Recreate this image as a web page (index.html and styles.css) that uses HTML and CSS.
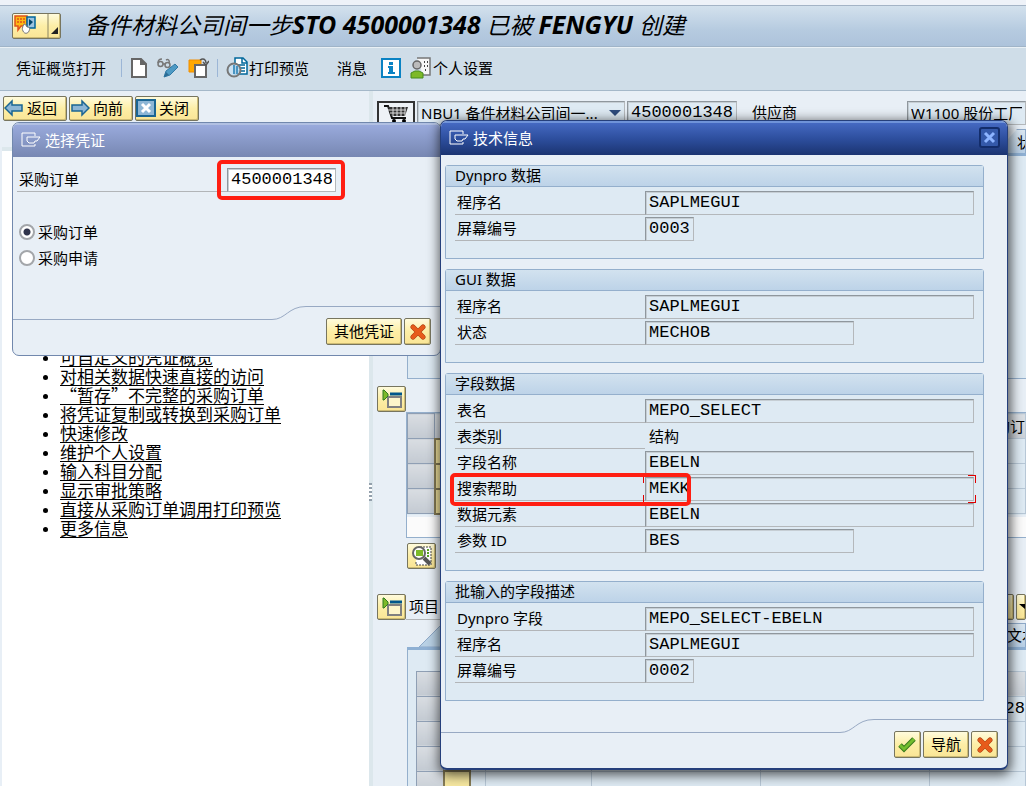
FILE: index.html
```html
<!DOCTYPE html>
<html lang="zh-CN">
<head>
    <meta charset="UTF-8">
    <meta name="viewport" content="width=device-width, initial-scale=1.0">
    <title>备件材料公司间一步STO 4500001348</title>
    <link rel="stylesheet" href="styles.css">
</head>
<body>
    <header class="title-bar">
        <button class="btn menu-btn" aria-label="菜单">
            <svg width="47" height="24" viewBox="0 0 47 24">
                <path d="M2 2h12v10H8l-3 4v-4H2z" fill="#fdb913" stroke="#e0521b" stroke-width="1.5"/>
                <path d="M4 5h2m1 0h2m1 0h2M4 8h2m1 0h2m1 0h2" stroke="#e0521b" stroke-width="1.5"/>
                <path d="M14 3h8v11h-8z" fill="#9cc3df" stroke="#00659b" stroke-width="1.5"/>
                <path d="M16 5l4 3-4 4z" fill="#00456b"/>
                <path d="M11 10c2 0 2 2 3 3 3 0 3 2 2 4-1 3-5 3-6 0-1-2-1-3 1-7z" fill="#fff" stroke="#777"/>
                <path d="M35 0v24" stroke="#8b8563"/>
                <path d="M45 13v7h-7z" fill="#222"/>
            </svg>
        </button>
        <h1>备件材料公司间一步<b>STO 4500001348</b> 已被 <b>FENGYU</b> 创建</h1>
    </header>

    <nav class="toolbar">
        <button class="tool tool-first">凭证概览打开</button>
        <span class="sep"></span>
        <button class="tool" aria-label="新建">
            <svg width="18" height="22" viewBox="0 0 18 22"><path d="M2 2h9l5 5v13H2z" fill="#fff" stroke="#666" stroke-width="2"/><path d="M10 1l7 7h-7z" fill="#666"/></svg>
        </button>
        <button class="tool tool-icon" aria-label="显示/更改">
            <svg width="22" height="22" viewBox="0 0 22 22"><g fill="none" stroke="#777" stroke-width="1.5"><circle cx="3.500" cy="7" r="2.500"/><circle cx="10.500" cy="8" r="2.500"/><path d="M1 6c0-3 2-4 4-4M6 7h2M12 6c1-3-1-4-3-3"/></g><path d="M7 20l2-6 9-7 3 3-8 8z" fill="#4e9ac4" stroke="#3179a5"/><path d="M7 20l2-5 3 3z" fill="#2a6b94"/></svg>
        </button>
        <button class="tool tool-icon" aria-label="其他采购订单">
            <svg width="21" height="22" viewBox="0 0 21 22"><path d="M1 3h12v12H1z" fill="#ffa800" stroke="#f08c00"/><path d="M7 8h11v12H7z" fill="#fff" stroke="#666" stroke-width="2"/><path d="M12 3c3-2 6-1 6 3m-3-1l3 3 3-4" fill="none" stroke="#555" stroke-width="1.5"/></svg>
        </button>
        <span class="sep"></span>
        <button class="tool">
            <svg width="22" height="22" viewBox="0 0 22 22"><path d="M9 1h8l4 4v12H9z" fill="#fff" stroke="#00679b" stroke-width="1.500"/><path d="M16 1v5h5M12 8h7M12 11h7M12 14h7" fill="none" stroke="#00679b" stroke-width="1.500"/><circle cx="8" cy="13" r="6.500" fill="#c9e2f3" fill-opacity=".85" stroke="#777" stroke-width="2"/><path d="M8 8v9M11 9v8" stroke="#4994c1" stroke-width="2"/></svg>打印预览
        </button>
        <button class="tool tool-msg">消息</button>
        <button class="tool" aria-label="帮助">
            <svg width="20" height="20" viewBox="0 0 20 20"><path d="M1 1h18v18H1z" fill="#fff" stroke="#0a82c3" stroke-width="2"/><path d="M8 4h4v3H8zM7 8h5v6h2v2H7v-2h1v-4H7z" fill="#0a82c3"/></svg>
        </button>
        <button class="tool tool-icon">
            <svg width="22" height="22" viewBox="0 0 22 22"><path d="M7 1h13v17h-7" fill="#f6f6f6" stroke="#777" stroke-width="1.500"/><path d="M14 5h1m2 0h1M14 9h1m2 0h1M15 13h1" stroke="#444" stroke-width="2"/><circle cx="7" cy="8" r="4" fill="#bbb" stroke="#666" stroke-width="1.500"/><path d="M1 21v-5l4-2h4l4 2v5z" fill="#7db928" stroke="#458c1b"/></svg>个人设置
        </button>
    </nav>

    <main class="workspace">
        <aside class="side">
            <div class="nav-buttons">
                <button class="btn nav-btn"><svg width="20" height="18" viewBox="0 0 20 18"><path d="M1 9l7-7v4h10v6H8v4z" fill="#8db6d5" stroke="#1a6593" stroke-width="1.500"/></svg>返回</button>
                <button class="btn nav-btn"><svg width="20" height="18" viewBox="0 0 20 18"><path d="M19 9l-7-7v4H2v6h10v4z" fill="#8db6d5" stroke="#1a6593" stroke-width="1.500"/></svg>向前</button>
                <button class="btn nav-btn"><svg width="20" height="18" viewBox="0 0 20 18"><path d="M1 1h18v16H1z" fill="#8db6d5" stroke="#1a6593" stroke-width="2"/><path d="M6 5l8 8m0-8l-8 8" stroke="#fff" stroke-width="3"/></svg>关闭</button>
            </div>
            <div class="doc">
                <ul>
                    <li><a href="#">可自定义的凭证概览</a></li>
                    <li><a href="#">对相关数据快速直接的访问</a></li>
                    <li><a href="#">“暂存”不完整的采购订单</a></li>
                    <li><a href="#">将凭证复制或转换到采购订单</a></li>
                    <li><a href="#">快速修改</a></li>
                    <li><a href="#">维护个人设置</a></li>
                    <li><a href="#">输入科目分配</a></li>
                    <li><a href="#">显示审批策略</a></li>
                    <li><a href="#">直接从采购订单调用打印预览</a></li>
                    <li><a href="#">更多信息</a></li>
                </ul>
            </div>
        </aside>
        <div class="splitter"><span class="grip"></span></div>

        <section class="order">
            <div class="order-head">
                <button class="cart" aria-label="采购订单">
                    <svg width="28" height="22" viewBox="0 0 28 22"><path d="M1 2h4l4 12h14" fill="none" stroke="#111" stroke-width="2"/><path d="M5 3h20l-3 9H8z" fill="#333"/><path d="M5 6h18M7 9h15M10 3v9M14 3v9M18 3v9M22 3v9" stroke="#ddd"/><circle cx="11" cy="17" r="2"/><circle cx="21" cy="17" r="2"/></svg>
                </button>
                <div class="select-wrap">
                    <select class="field" aria-label="凭证类型"><option>NBU1 备件材料公司间一...</option></select>
                    <svg width="14" height="8" viewBox="0 0 14 8"><path d="M1 1h12L7 7z" fill="#2d4b7c"/></svg>
                </div>
                <input class="field mono order-no" type="text" value="4500001348" aria-label="采购订单号" readonly>
                <label class="vendor-label" for="vendor">供应商</label>
                <input class="field vendor" id="vendor" type="text" value="W1100 股份工厂" readonly>
            </div>

            <div class="tabs head-tabs"><button class="tab tab-status">状态</button></div>
            <div class="panel head-panel"></div>

            <div class="overview">
                <button class="btn icon-btn" aria-label="项目概览">
                    <svg width="22" height="20" viewBox="0 0 22 20"><path d="M7 8h13v10H7z" fill="#fdf5ca" stroke="#808080" stroke-width="2"/><path d="M9 5h12" stroke="#00568b" stroke-width="3"/><path d="M2 1h1l4 4v2l-4 4H2z" fill="#7db928" stroke="#2d7b20"/></svg>
                </button>
                <div class="grid-box">
                    <table class="grid">
                        <thead>
                            <tr><th class="sel"></th><th class="flag">状</th><th class="right">购订</th></tr>
                        </thead>
                        <tbody>
                            <tr><td class="sel"></td><td class="key"></td><td></td></tr>
                            <tr><td class="sel"></td><td class="key"></td><td></td></tr>
                            <tr><td class="sel"></td><td class="key"></td><td></td></tr>
                        </tbody>
                    </table>
                    <div class="scroll-track"></div>
                </div>
                <button class="btn icon-btn search-btn" aria-label="详细信息">
                    <svg width="22" height="20" viewBox="0 0 22 20"><path d="M9 1h11v18H5v-4" fill="#fff" stroke="#444" stroke-dasharray="2 1"/><path d="M16 4h2M16 7h2M16 10h2" stroke="#59a423" stroke-width="2"/><circle cx="8" cy="7" r="6" fill="#fff" stroke="#666" stroke-width="2"/><path d="M5 4h7v6H5z" fill="#7db928"/><path d="M13 12l6 6" stroke="#555" stroke-width="4"/></svg>
                </button>
            </div>

            <div class="item-head">
                <button class="btn icon-btn" aria-label="项目细节">
                    <svg width="22" height="20" viewBox="0 0 22 20"><path d="M7 8h13v10H7z" fill="#fdf5ca" stroke="#808080" stroke-width="2"/><path d="M9 5h12" stroke="#00568b" stroke-width="3"/><path d="M2 1h1l4 4v2l-4 4H2z" fill="#7db928" stroke="#2d7b20"/></svg>
                </button>
                <label class="item-label" for="item">项目</label>
                <select class="field item-select" id="item"><option></option></select>
                <button class="btn mini" aria-label="上一项"></button>
                <button class="btn mini mini-last" aria-label="下一项"><svg width="8" height="8" viewBox="0 0 8 8"><path d="M2 1h6v5z"/></svg></button>
            </div>
            <div class="tabs item-tabs">
                <svg width="40" height="23" viewBox="0 0 40 23"><path d="M0 23L22 1h18v22z" fill="#b9d1e5" stroke="#8ea9c8"/></svg>
                <button class="tab tab-text">文本</button>
            </div>
            <div class="panel item-panel">
                <table class="grid cond">
                    <thead>
                        <tr><th class="sel"></th><th class="flag"></th><th class="c1"></th><th class="c2"></th><th class="c3"></th><th class="c3"></th><th></th></tr>
                    </thead>
                    <tbody>
                        <tr><td class="sel"></td><td class="flag"></td><td></td><td></td><td></td><td></td><td class="amount">28</td></tr>
                        <tr><td class="sel"></td><td class="flag"></td><td></td><td></td><td></td><td></td><td></td></tr>
                        <tr><td class="sel"></td><td class="flag"></td><td></td><td></td><td></td><td></td><td></td></tr>
                        <tr><td class="sel"></td><td class="key"></td><td></td><td></td><td></td><td></td><td></td></tr>
                    </tbody>
                </table>
            </div>
        </section>
    </main>

    <section class="dialog select-dialog">
        <div class="dialog-title">
            <svg width="22" height="16" viewBox="0 0 22 16"><path d="M15 4V1H2v13h13v-2M7 5h13l-3 4h-2l-1 2H9L7 9z" fill="none" stroke="#fff"/></svg>
            <h2>选择凭证</h2>
        </div>
        <form class="select-form">
            <div class="po-row">
                <label for="po">采购订单</label>
                <input class="field mono po-input" id="po" type="text" value="4500001348">
            </div>
            <label class="radio"><input type="radio" name="kind" checked>采购订单</label>
            <label class="radio"><input type="radio" name="kind">采购申请</label>
        </form>
        <div class="dialog-foot">
            <span class="edge-low"></span>
            <svg class="edge-curve" width="34" height="14" viewBox="0 0 34 14"><path d="M0 13.500C14 13.500 16 .500 34 .500" fill="none" stroke="#98a9c3"/></svg>
            <div class="foot-buttons">
                <button class="btn foot-btn">其他凭证</button>
                <button class="btn foot-icon" aria-label="取消"><svg width="16" height="16" viewBox="0 0 16 16"><path d="M3 3l10 10M13 3L3 13" stroke="#a63c10" stroke-width="5" stroke-linecap="round"/><path d="M3 3l10 10M13 3L3 13" stroke="#e75b1b" stroke-width="4" stroke-linecap="round"/></svg></button>
            </div>
        </div>
    </section>

    <section class="dialog tech-dialog">
        <div class="dialog-title">
            <svg width="22" height="16" viewBox="0 0 22 16"><path d="M15 4V1H2v13h13v-2M7 5h13l-3 4h-2l-1 2H9L7 9z" fill="none" stroke="#fff"/></svg>
            <h2>技术信息</h2>
            <button class="close" aria-label="关闭"><svg width="13" height="13" viewBox="0 0 13 13"><path d="M2 2l9 9m0-9l-9 9" stroke="#8db4ff" stroke-width="3"/></svg></button>
        </div>
        <form class="tech-form">
            <fieldset class="group">
                <div class="group-title">Dynpro 数据</div>
                <div class="row"><label for="f1">程序名</label><input class="field mono wide" id="f1" value="SAPLMEGUI" readonly></div>
                <div class="row"><label for="f2">屏幕编号</label><input class="field mono small" id="f2" value="0003" readonly></div>
            </fieldset>
            <fieldset class="group">
                <div class="group-title">GUI 数据</div>
                <div class="row"><label for="f3">程序名</label><input class="field mono wide" id="f3" value="SAPLMEGUI" readonly></div>
                <div class="row"><label for="f4">状态</label><input class="field mono medium" id="f4" value="MECHOB" readonly></div>
            </fieldset>
            <fieldset class="group">
                <div class="group-title">字段数据</div>
                <div class="row"><label for="f5">表名</label><input class="field mono wide" id="f5" value="MEPO_SELECT" readonly></div>
                <div class="row"><label for="f6">表类别</label><output class="plain" id="f6">结构</output></div>
                <div class="row"><label for="f7">字段名称</label><input class="field mono wide" id="f7" value="EBELN" readonly></div>
                <div class="row marked"><label for="f8">搜索帮助</label><span class="focus wide"><input class="field mono wide" id="f8" value="MEKK" readonly></span></div>
                <div class="row"><label for="f9">数据元素</label><input class="field mono wide" id="f9" value="EBELN" readonly></div>
                <div class="row"><label for="f10">参数 ID</label><input class="field mono medium" id="f10" value="BES" readonly></div>
            </fieldset>
            <fieldset class="group">
                <div class="group-title">批输入的字段描述</div>
                <div class="row"><label for="f11">Dynpro 字段</label><input class="field mono wide" id="f11" value="MEPO_SELECT-EBELN" readonly></div>
                <div class="row"><label for="f12">程序名</label><input class="field mono wide" id="f12" value="SAPLMEGUI" readonly></div>
                <div class="row"><label for="f13">屏幕编号</label><input class="field mono small" id="f13" value="0002" readonly></div>
            </fieldset>
        </form>
        <div class="dialog-foot">
            <span class="edge-low"></span>
            <svg class="edge-curve" width="34" height="14" viewBox="0 0 34 14"><path d="M0 13.500C14 13.500 16 .500 34 .500" fill="none" stroke="#98a9c3"/></svg>
            <div class="foot-buttons">
                <button class="btn foot-icon" aria-label="确定"><svg width="18" height="16" viewBox="0 0 18 16"><path d="M2 8l4 4 10-10" fill="none" stroke="#39791d" stroke-width="5"/><path d="M2 8l4 4 10-10" fill="none" stroke="#73bd2e" stroke-width="3"/></svg></button>
                <button class="btn foot-btn">导航</button>
                <button class="btn foot-icon" aria-label="取消"><svg width="16" height="16" viewBox="0 0 16 16"><path d="M3 3l10 10M13 3L3 13" stroke="#a63c10" stroke-width="5" stroke-linecap="round"/><path d="M3 3l10 10M13 3L3 13" stroke="#e75b1b" stroke-width="4" stroke-linecap="round"/></svg></button>
            </div>
        </div>
    </section>
</body>
</html>
```
FILE: styles.css
```css
:root {
    --bg: #e8eff6;
    --panel: #deeaf3;
    --line: #94afcc;
    --row-line: #b2b5b8;
    --mark: #ff1e12;
    --corner: #e00000;
}

*,
*::before,
*::after {
    box-sizing: border-box;
}

body {
    margin: 0;
    height: 100vh;
    overflow: hidden;
    display: flex;
    flex-direction: column;
    position: relative;
    border-top: 5px solid #eef2f8;
    background: var(--bg);
    color: #000;
    font-family: "Noto Sans", "Noto Sans CJK SC", sans-serif;
    font-size: 15px;
    line-height: 18px;
}

button,
input,
select {
    margin: 0;
    padding: 0;
    font: inherit;
    color: inherit;
}

svg {
    display: block;
    flex: none;
}

h1,
h2 {
    margin: 0;
    font-weight: normal;
}

.btn {
    display: flex;
    align-items: center;
    justify-content: center;
    border: 1px solid #77755f;
    border-radius: 2px;
    background: linear-gradient(#fffbdc, #fdeea6 50%, #fae596);
    box-shadow: inset -1px -1px 0 #cdbb74;
    white-space: nowrap;
}

/* title and toolbar */
.title-bar {
    flex: none;
    display: flex;
    align-items: center;
    gap: 24px;
    height: 42px;
    padding-left: 12px;
    border-top: 1px solid #a4b4c6;
    border-bottom: 1px solid #a0b4c8;
    background: linear-gradient(#d3e1ed, #b6cbe0 60%, #adc3db);
}

.menu-btn {
    width: 49px;
    height: 26px;
}

.title-bar h1 {
    padding-bottom: 3px;
    font-size: 23px;
    line-height: 30px;
    font-style: italic;
    white-space: nowrap;
}

.title-bar b {
    font-size: 25px;
}

.toolbar {
    flex: none;
    display: flex;
    align-items: center;
    height: 44px;
    padding: 0 0 2px 16px;
    border-top: 1px solid #e9f0f5;
    border-bottom: 1px solid #a5b8c9;
    background: #cfdde8;
}

.tool {
    display: flex;
    align-items: center;
    gap: 1px;
    border: 0;
    background: none;
    white-space: nowrap;
}

.tool-icon {
    margin-left: 9px;
}

.tool-msg {
    margin: 0 14px 0 28px;
}

.sep {
    width: 1px;
    height: 18px;
    margin: 0 8px;
    background: #9cb6d6;
}

.tool-first + .sep {
    margin-left: 15px;
}

.workspace {
    flex: 1;
    min-height: 0;
    display: flex;
}

/* left side */
.side {
    flex: none;
    width: 369px;
    display: flex;
    flex-direction: column;
}

.nav-buttons {
    display: flex;
    gap: 2px;
    padding: 5px 3px 26px;
}

.nav-btn {
    width: 64px;
    height: 25px;
    gap: 3px;
    justify-content: flex-start;
    padding-bottom: 1px;
}

.doc {
    flex: 1;
    margin-left: 2px;
    padding-top: 196px;
    border-top: 4px solid #dce7ec;
    background: #fff;
}

.doc ul {
    margin: 0;
    padding-left: 58px;
    font-family: "Noto Sans CJK SC", sans-serif;
}

.doc li {
    font-size: 17px;
    line-height: 19px;
}

.doc li::marker {
    font-size: 13px;
}

.doc a {
    color: #000;
    text-underline-offset: 2px;
    text-decoration-thickness: 1px;
}

.splitter {
    flex: none;
    width: 4px;
    display: flex;
    align-items: center;
    background: #dce7ec;
}

.grip {
    width: 3px;
    height: 18px;
    margin-top: 106px;
    background: repeating-linear-gradient(#93a0ac 0 2px, #fff 2px 4px);
}

/* order screen */
.order {
    flex: 1;
    min-width: 0;
    display: flex;
    flex-direction: column;
    padding-left: 4px;
    overflow: hidden;
}

.field {
    height: 24px;
    padding: 0 3px 1px;
    border: 1px solid;
    border-color: #8f979d #b4b8bb #b4b8bb #8f979d;
    border-radius: 0;
    outline: 0;
    background: var(--panel);
    box-shadow: inset 1px 1px 0 #c6ced4;
}

.mono {
    font-family: "Liberation Mono", "Noto Sans CJK SC", monospace;
    font-size: 17px;
}

.order-head {
    flex: none;
    display: flex;
    height: 38px;
    padding-top: 10px;
    gap: 2px;
}

.cart {
    width: 38px;
    height: 26px;
    padding: 1px 4px;
    border: 2px solid #333;
    background: #eef2f6;
}

.select-wrap {
    display: grid;
    align-items: start;
}

.select-wrap > * {
    grid-area: 1 / 1;
}

.select-wrap select {
    width: 208px;
    appearance: none;
}

.select-wrap svg {
    justify-self: end;
    margin: 8px 3px;
}

.order-no {
    flex: none;
    width: 110px;
}

.vendor-label {
    flex: none;
    width: 164px;
    padding: 2px 0 0 13px;
}

.vendor {
    flex: 1;
    min-width: 0;
    margin-left: 2px;
}

.tabs {
    flex: none;
    display: flex;
    align-items: flex-end;
    margin-left: 30px;
    border-bottom: 3px solid #8fb0d3;
}

.head-tabs {
    height: 27px;
}

.tab {
    height: 24px;
    padding: 0;
    overflow: hidden;
    border: 1px solid #8ea9c8;
    border-bottom: 0;
    background: linear-gradient(#d9e6f1, #b8cfe5);
    white-space: nowrap;
    text-align: left;
}

.tab-status {
    width: 18px;
    margin-left: auto;
    padding-left: 9px;
    border-left: 0;
    clip-path: polygon(0 10px, 9px 0, 100% 0, 100% 100%, 0 100%);
}

.panel {
    margin-left: 30px;
    border-left: 1px solid var(--line);
    background: var(--panel);
}

.head-panel {
    flex: none;
    height: 223px;
    border-bottom: 1px solid var(--line);
}

.overview {
    flex: none;
    padding-top: 7px;
}

.icon-btn {
    width: 29px;
    height: 26px;
}

.grid-box {
    margin-left: 29px;
    border: 1px solid var(--line);
    border-right: 0;
}

.grid {
    width: 100%;
    table-layout: fixed;
    border-collapse: collapse;
    background: var(--panel);
}

.grid th,
.grid td {
    height: 25px;
    padding: 0;
    border: 1px solid #b7c7d6;
    font-weight: normal;
    overflow: hidden;
    white-space: nowrap;
}

.grid th {
    background: linear-gradient(#dadfe4, #cbd1d8);
}

.grid .sel {
    width: 27px;
    border: 1px solid #8f9fb4;
    background: linear-gradient(#d9dde2, #c3cad2);
}

.grid .flag {
    width: 26px;
}

.grid .right {
    text-align: right;
}

.grid .key {
    width: 26px;
    border: 2px solid #857b56;
    background: #f6e7a0;
}

.scroll-track {
    height: 20px;
    margin-top: 2px;
    background: #fbfbfb;
}

.search-btn {
    margin: 5px 0 0 30px;
}

.item-head {
    flex: none;
    display: flex;
    padding-top: 25px;
}

.item-label {
    padding: 3px 3px 1px;
    border-bottom: 1px solid var(--row-line);
}

.item-select {
    flex: 1;
    appearance: none;
}

.mini {
    width: 15px;
    height: 26px;
    margin-left: 2px;
}

.mini-last {
    width: 10px;
}

.item-tabs {
    height: 30px;
    padding-left: 12px;
}

.tab-text {
    width: 20px;
    margin-left: auto;
}

.item-panel {
    flex: 1;
    padding: 21px 0 0 8px;
}

.cond {
    border-left: 1px solid var(--line);
    border-top: 1px solid var(--line);
}

.cond .c1 {
    width: 16px;
}

.cond .c2 {
    width: 106px;
}

.cond .c3 {
    width: 169px;
}

.cond .amount {
    text-align: right;
    font-family: "Liberation Mono", monospace;
    font-size: 17px;
}

/* dialogs */
.dialog {
    position: absolute;
    display: flex;
    flex-direction: column;
    overflow: hidden;
    border: 1px solid #7188ad;
    border-radius: 7px;
    background: var(--bg);
}

.select-dialog {
    left: 12px;
    top: 117px;
    width: 429px;
    height: 234px;
}

.tech-dialog {
    left: 440px;
    top: 115px;
    width: 568px;
    height: 650px;
    border-color: #253f7b;
    border-bottom-width: 2px;
    box-shadow: 1px 3px 12px 2px rgba(0, 0, 0, 0.65);
}

.dialog-title {
    flex: none;
    display: flex;
    align-items: center;
    gap: 3px;
    height: 34px;
    padding: 0 7px 3px;
    border-top: 2px solid #b1c0e2;
    background: linear-gradient(#99aadc, #7787b2);
    color: #fff;
}

.tech-dialog .dialog-title {
    border-top-color: #6f93d9;
    background: linear-gradient(#4569c2, #2d4e9d 50%, #1b3471);
}

.dialog-title h2 {
    flex: 1;
    font-size: 15px;
}

.close {
    width: 21px;
    height: 21px;
    padding: 2px;
    border: 2px solid #132d6b;
    border-radius: 3px;
    background: #3459aa;
}

.select-form {
    flex: 1;
    padding: 11px 4px 0;
}

.po-row {
    position: relative;
    display: flex;
    height: 24px;
    margin-bottom: 27px;
}

.po-row label {
    width: 210px;
    padding: 2px;
    border-bottom: 1px solid var(--row-line);
}

.po-input {
    width: 109px;
    background: #fff;
}

.po-row::after,
.marked::after {
    content: "";
    position: absolute;
    border: 4px solid var(--mark);
    border-radius: 5px;
    pointer-events: none;
}

.po-row::after {
    left: 200px;
    top: -8px;
    width: 128px;
    height: 40px;
}

.radio {
    display: flex;
    align-items: center;
    gap: 3px;
    height: 26px;
    padding-left: 2px;
}

.radio input {
    appearance: none;
    width: 16px;
    height: 16px;
    border: 2px solid #a3a6aa;
    border-radius: 50%;
    background: #fff;
}

.radio input:checked {
    background: radial-gradient(circle, #30344b 0 3px, #fff 4px);
}

.dialog-foot {
    flex: none;
    display: flex;
    height: 49px;
}

.edge-low {
    flex: 1;
    height: 14px;
    border-bottom: 1px solid #98a9c3;
}

.foot-buttons {
    display: flex;
    gap: 2px;
    padding: 11px 9px 0 20px;
    border-top: 1px solid #98a9c3;
}

.foot-btn {
    height: 27px;
    padding: 0 7px 2px;
}

.foot-icon {
    width: 27px;
    height: 27px;
}

.tech-form {
    flex: 1;
    display: flex;
    flex-direction: column;
    gap: 10px;
    padding: 10px 23px 0 4px;
}

.group {
    min-width: 0;
    margin: 0;
    padding: 0 9px 17px;
    border: 1px solid var(--line);
    border-radius: 3px 3px 0 0;
    background: var(--panel);
}

.group-title {
    height: 21px;
    margin: 0 -9px 4px;
    padding-left: 9px;
    border-bottom: 1px solid var(--line);
    background: linear-gradient(#d2e2ef, #bdd3e8);
}

.row {
    position: relative;
    display: flex;
    height: 24px;
}

.row + .row {
    margin-top: 2px;
}

.row label {
    flex: none;
    width: 190px;
    padding: 2px 2px 0;
    border-bottom: 1px solid var(--row-line);
}

.wide {
    flex: 1;
    min-width: 0;
}

.medium {
    width: 209px;
}

.small {
    width: 49px;
}

.plain {
    padding: 2px 4px;
}

.marked {
    z-index: 1;
}

.focus {
    position: relative;
    display: flex;
}

/* red corners round the focused field */
.focus::after {
    content: "";
    position: absolute;
    inset: -2px;
    pointer-events: none;
    background-image:
        linear-gradient(var(--corner), var(--corner)),
        linear-gradient(var(--corner), var(--corner)),
        linear-gradient(var(--corner), var(--corner)),
        linear-gradient(var(--corner), var(--corner)),
        linear-gradient(var(--corner), var(--corner)),
        linear-gradient(var(--corner), var(--corner));
    background-position: left top, left bottom, right top, right bottom, right top, right bottom;
    background-size: 1px 8px, 1px 8px, 1px 8px, 1px 8px, 8px 1px, 8px 1px;
    background-repeat: no-repeat;
}

.marked::after {
    left: -5px;
    top: -4px;
    width: 241px;
    height: 33px;
}
```
